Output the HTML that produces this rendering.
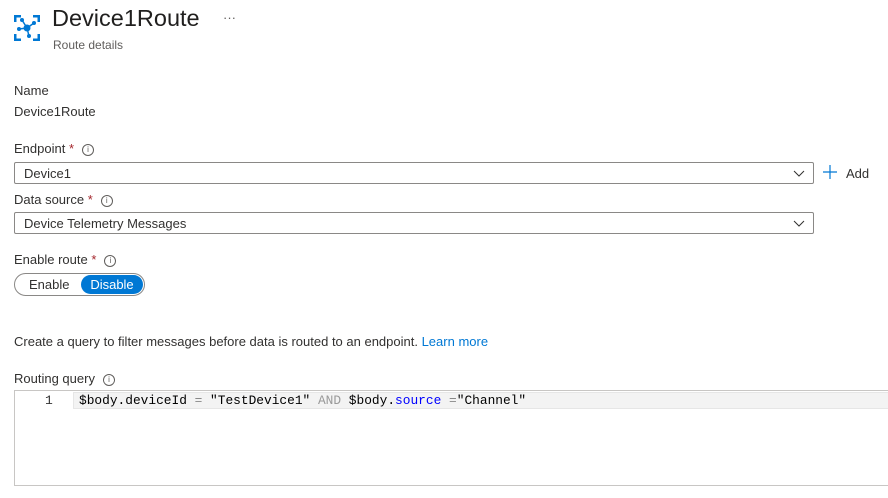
<!DOCTYPE html>
<html><head><style>
body{margin:0;width:888px;height:498px;background:#fff;font-family:"Liberation Sans",sans-serif;color:#323130;font-size:13px;position:relative;overflow:hidden}
.a{position:absolute;white-space:nowrap}
.info{display:inline-block;width:10px;height:10px;border:1px solid #605e5c;border-radius:50%;font-size:8px;line-height:10px;text-align:center;color:#605e5c;vertical-align:1px;margin-left:8px}
.req{color:#a4262c}
.dd{position:absolute;left:14px;height:22px;border:1px solid #8a8886;border-radius:2px;box-sizing:border-box;padding-left:9px;line-height:21px}
.chev{position:absolute;right:8px;top:4px}
</style></head><body>
<svg class="a" style="left:13px;top:14px" width="28" height="28" viewBox="0 0 28 28">
<g fill="#0078d4"><path d="M1 1h7v2.5H3.5V8H1z"/><path d="M27 1h-7v2.5h4.5V8H27z"/><path d="M1 27h7v-2.5H3.5V20H1z"/><path d="M27 27h-7v-2.5h4.5V20H27z"/>
<circle cx="14" cy="14" r="3.5"/><circle cx="9" cy="6" r="2"/><circle cx="21" cy="9" r="2"/><circle cx="6" cy="15" r="2"/><circle cx="16" cy="22" r="2"/></g>
<g stroke="#0078d4" stroke-width="1.5"><path d="M14 14L9 6M14 14L21 9M14 14L6 15M14 14L16 22"/></g></svg>
<div class="a" style="left:52px;top:5px;font-size:23.5px;color:#201f1e">Device1Route</div>
<div class="a" style="left:223px;top:10px;font-size:13px;color:#605e5c">···</div>
<div class="a" style="left:53px;top:38px;font-size:12px;color:#605e5c">Route details</div>
<div class="a" style="left:14px;top:83px">Name</div>
<div class="a" style="left:14px;top:104px">Device1Route</div>
<div class="a" style="left:14px;top:141px">Endpoint <span class="req">*</span><span class="info">i</span></div>
<div class="dd" style="top:162px;width:800px">Device1<svg class="chev" width="12" height="12"><path d="M1 4l5 5 5-5" fill="none" stroke="#323130"/></svg></div>
<svg class="a" style="left:823px;top:165px" width="14" height="14"><path d="M7 0v14M0 7h14" stroke="#0078d4" stroke-width="1.2"/></svg>
<div class="a" style="left:846px;top:166px">Add</div>
<div class="a" style="left:14px;top:192px">Data source <span class="req">*</span><span class="info">i</span></div>
<div class="dd" style="top:212px;width:800px">Device Telemetry Messages<svg class="chev" width="12" height="12"><path d="M1 4l5 5 5-5" fill="none" stroke="#323130"/></svg></div>
<div class="a" style="left:14px;top:252px">Enable route <span class="req">*</span><span class="info">i</span></div>
<div class="a" style="left:14px;top:273px;width:131px;height:23px;border:1px solid #8a8886;border-radius:12px;box-sizing:border-box"></div>
<div class="a" style="left:29px;top:277px">Enable</div>
<div class="a" style="left:81px;top:275px;width:62px;height:19px;background:#0078d4;border-radius:10px;color:#fff;text-align:center;line-height:19px">Disable</div>
<div class="a" style="left:14px;top:334px">Create a query to filter messages before data is routed to an endpoint. <span style="color:#0078d4">Learn more</span></div>
<div class="a" style="left:14px;top:371px">Routing query<span class="info">i</span></div>
<div class="a" style="left:14px;top:390px;width:880px;height:96px;border:1px solid #c8c6c4;box-sizing:border-box"></div>
<div class="a" style="left:73px;top:392px;width:820px;height:17px;background:#f3f3f3;border:1px solid #e6e6e6;box-sizing:border-box"></div>
<div class="a" style="left:45px;top:393px;font-family:'Liberation Mono',monospace;font-size:13px;color:#333">1</div>
<div class="a" style="left:79px;top:393px;font-family:'Liberation Mono',monospace;font-size:12.85px;color:#000">$body.deviceId <span style="color:#888">=</span> "TestDevice1" <span style="color:#999">AND</span> $body.<span style="color:#0000ff">source</span> <span style="color:#888">=</span>"Channel"</div>
</body></html>
